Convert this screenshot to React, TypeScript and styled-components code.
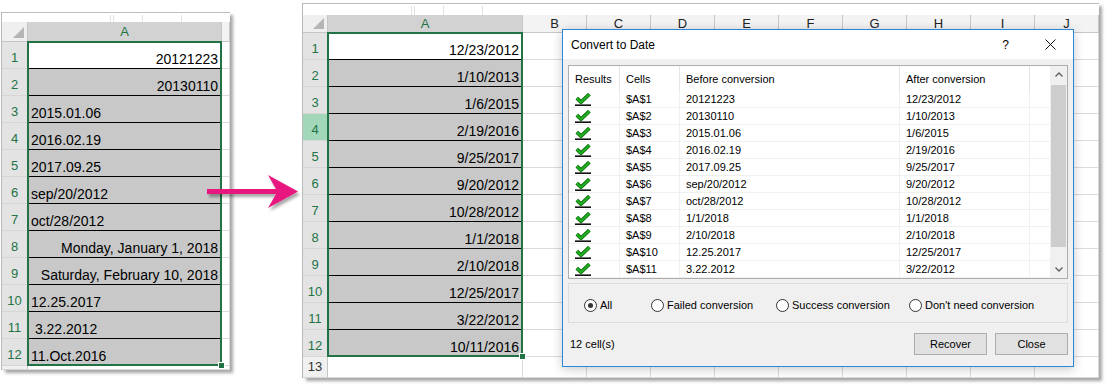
import { createGlobalStyle, styled } from "styled-components";

const GlobalStyle = createGlobalStyle`
  html, body {
    margin: 0;
    padding: 0;
    background: #ffffff;
  }
  body {
    width: 1108px;
    height: 386px;
    overflow: hidden;
    font-family: "Liberation Sans", Arial, sans-serif;
  }
  * {
    box-sizing: border-box;
  }
`;

const GREEN = "#217346";
const GRID = "#dadada";
const HEAD_LINE = "#c6c6c6";

type Align = "left" | "right";
type SheetRow = { text: string; align: Align };

const leftRows: SheetRow[] = [
  { text: "20121223", align: "right" },
  { text: "20130110", align: "right" },
  { text: "2015.01.06", align: "left" },
  { text: "2016.02.19", align: "left" },
  { text: "2017.09.25", align: "left" },
  { text: "sep/20/2012", align: "left" },
  { text: "oct/28/2012", align: "left" },
  { text: "Monday, January 1, 2018", align: "right" },
  { text: "Saturday, February 10, 2018", align: "right" },
  { text: "12.25.2017", align: "left" },
  { text: " 3.22.2012", align: "left" },
  { text: "11.Oct.2016", align: "left" },
];

const rightRows: SheetRow[] = [
  "12/23/2012",
  "1/10/2013",
  "1/6/2015",
  "2/19/2016",
  "9/25/2017",
  "9/20/2012",
  "10/28/2012",
  "1/1/2018",
  "2/10/2018",
  "12/25/2017",
  "3/22/2012",
  "10/11/2016",
].map((text) => ({ text, align: "right" as Align }));

const results = [
  ["$A$1", "20121223", "12/23/2012"],
  ["$A$2", "20130110", "1/10/2013"],
  ["$A$3", "2015.01.06", "1/6/2015"],
  ["$A$4", "2016.02.19", "2/19/2016"],
  ["$A$5", "2017.09.25", "9/25/2017"],
  ["$A$6", "sep/20/2012", "9/20/2012"],
  ["$A$7", "oct/28/2012", "10/28/2012"],
  ["$A$8", "1/1/2018", "1/1/2018"],
  ["$A$9", "2/10/2018", "2/10/2018"],
  ["$A$10", "12.25.2017", "12/25/2017"],
  ["$A$11", "3.22.2012", "3/22/2012"],
];

const ROW_H = 27;

/* ---------- page ---------- */

const Page = styled.div`
  position: relative;
  width: 1108px;
  height: 386px;
  display: flex;
  align-items: flex-start;
  gap: 73px;
  padding-left: 2px;
`;

/* ---------- spreadsheet ---------- */

const SheetFrame = styled.div<{ $top: number }>`
  position: relative;
  margin-top: ${(p) => p.$top}px;
  background: #ffffff;
  box-shadow: -1px 0 0 #b9b9b9, 3px 3px 3px rgba(0, 0, 0, 0.35);
`;

const TopStrip = styled.div<{ $h: number }>`
  height: ${(p) => p.$h}px;
  border-top: 1px solid #bdbdbd;
  background: #ffffff;
  display: flex;
  gap: 28px;
  padding: 2px 0 0 108px;
`;

const StripBox = styled.div<{ $w: number }>`
  width: ${(p) => p.$w}px;
  height: 100%;
  border-left: 1px solid #e2e2e2;
  border-right: 1px solid #e2e2e2;
`;

const HeaderRow = styled.div<{ $h: number }>`
  display: flex;
  height: ${(p) => p.$h}px;
`;

const Corner = styled.div<{ $w: number }>`
  position: relative;
  width: ${(p) => p.$w}px;
  background: #efefef;
  border-right: 1px solid ${HEAD_LINE};
  border-bottom: 1px solid ${HEAD_LINE};
  &::after {
    content: "";
    position: absolute;
    right: 3px;
    bottom: 3px;
    border-style: solid;
    border-width: 0 0 11px 11px;
    border-color: transparent transparent #b5b5b5 transparent;
  }
`;

const ColHeader = styled.div<{ $w: number; $selected?: boolean }>`
  width: ${(p) => p.$w}px;
  display: flex;
  align-items: center;
  justify-content: center;
  font-size: 13px;
  color: ${(p) => (p.$selected ? GREEN : "#222222")};
  background: ${(p) => (p.$selected ? "#d2d2d2" : "#f3f3f3")};
  border-right: 1px solid ${HEAD_LINE};
  border-bottom: 1px solid ${HEAD_LINE};
`;

const Row = styled.div<{ $h: number }>`
  display: flex;
  height: ${(p) => p.$h}px;
`;

const RowHeader = styled.div<{ $w: number; $selected?: boolean; $active?: boolean }>`
  width: ${(p) => p.$w}px;
  display: flex;
  align-items: flex-end;
  justify-content: center;
  padding-bottom: 3px;
  font-size: 13px;
  line-height: 15px;
  color: ${(p) => (p.$selected ? GREEN : "#333333")};
  background: ${(p) =>
    p.$active ? "#a3d7b9" : p.$selected ? "#e3e3e3" : "#f0f0f0"};
  border-right: 1px solid ${HEAD_LINE};
  border-bottom: 1px solid #d6d6d6;
`;

const ValueCell = styled.div<{ $w: number; $align: Align; $filled: boolean; $last: boolean }>`
  width: ${(p) => p.$w}px;
  display: flex;
  align-items: flex-end;
  justify-content: ${(p) => (p.$align === "right" ? "flex-end" : "flex-start")};
  padding: 0 3px 1px 3px;
  font-size: 14px;
  line-height: 16px;
  color: #000000;
  white-space: pre;
  overflow: hidden;
  background: ${(p) => (p.$filled ? "#c8c8c8" : "#ffffff")};
  border-right: 1px solid ${GRID};
  border-bottom: 1px solid ${(p) => (p.$last ? GRID : "#000000")};
`;

const GridCell = styled.div<{ $w: number }>`
  width: ${(p) => p.$w}px;
  border-right: 1px solid ${GRID};
  border-bottom: 1px solid ${GRID};
`;

const Selection = styled.div<{ $top: number; $left: number; $w: number; $h: number }>`
  position: absolute;
  top: ${(p) => p.$top}px;
  left: ${(p) => p.$left}px;
  width: ${(p) => p.$w}px;
  height: ${(p) => p.$h}px;
  border: 2px solid ${GREEN};
  pointer-events: none;
`;

const FillHandle = styled.div`
  position: absolute;
  right: -5px;
  bottom: -5px;
  width: 7px;
  height: 7px;
  background: ${GREEN};
  border: 1px solid #ffffff;
`;

type SheetProps = {
  top: number;
  strip: number;
  header: number;
  rowHeaderW: number;
  colAW: number;
  others: number[];
  letters: string[];
  rows: SheetRow[];
  tail: number;
  tailLabel?: string;
  activeRow?: number;
};

function Sheet(props: SheetProps) {
  const { top, strip, header, rowHeaderW, colAW, others, letters, rows, tail, tailLabel, activeRow } = props;
  return (
    <SheetFrame $top={top}>
      <TopStrip $h={strip}>
        <StripBox $w={4} />
        <StripBox $w={40} />
      </TopStrip>
      <HeaderRow $h={header}>
        <Corner $w={rowHeaderW} />
        <ColHeader $w={colAW} $selected>
          A
        </ColHeader>
        {others.map((w, i) => (
          <ColHeader key={i} $w={w}>
            {letters[i] ?? ""}
          </ColHeader>
        ))}
      </HeaderRow>
      {rows.map((r, i) => (
        <Row key={i} $h={ROW_H}>
          <RowHeader $w={rowHeaderW} $selected $active={activeRow === i + 1}>
            {i + 1}
          </RowHeader>
          <ValueCell $w={colAW} $align={r.align} $filled={i > 0} $last={i === rows.length - 1}>
            {r.text}
          </ValueCell>
          {others.map((w, j) => (
            <GridCell key={j} $w={w} />
          ))}
        </Row>
      ))}
      <Row $h={tail}>
        <RowHeader $w={rowHeaderW}>{tailLabel}</RowHeader>
        <GridCell $w={colAW} />
        {others.map((w, j) => (
          <GridCell key={j} $w={w} />
        ))}
      </Row>
      <Selection
        $top={strip + header - 1}
        $left={rowHeaderW - 1}
        $w={colAW + 1}
        $h={rows.length * ROW_H + 1}
      >
        <FillHandle />
      </Selection>
    </SheetFrame>
  );
}

/* ---------- arrow ---------- */

const ArrowSvg = styled.svg`
  position: absolute;
  left: 200px;
  top: 168px;
`;

/* ---------- dialog ---------- */

const Dialog = styled.div`
  position: absolute;
  left: 562px;
  top: 29px;
  width: 512px;
  height: 338px;
  display: flex;
  flex-direction: column;
  background: #f0f0f0;
  border: 1px solid #2b87d9;
  box-shadow: 0 2px 10px rgba(0, 0, 0, 0.22);
  font-family: "Liberation Sans", Arial, sans-serif;
  font-size: 11px;
  color: #000000;
`;

const TitleBar = styled.div`
  height: 29px;
  display: flex;
  align-items: center;
  background: #ffffff;
  padding-left: 8px;
`;

const TitleText = styled.div`
  flex: 1;
  font-size: 12px;
`;

const TitleButton = styled.div`
  width: 45px;
  height: 29px;
  display: flex;
  align-items: center;
  justify-content: center;
  font-size: 12px;
`;

const Body = styled.div`
  flex: 1;
  display: flex;
  flex-direction: column;
  padding: 6px 5px 10px 5px;
`;

const ListBox = styled.div`
  height: 214px;
  display: flex;
  background: #ffffff;
  border: 1px solid #adadad;
`;

const ListMain = styled.div`
  flex: 1;
  display: flex;
  flex-direction: column;
`;

const listColumns = "51px 60px 220px 130px 1fr";

const ListHeader = styled.div`
  display: grid;
  grid-template-columns: ${listColumns};
  height: 25px;
`;

const HeadCell = styled.div`
  display: flex;
  align-items: center;
  padding-left: 6px;
  border-right: 1px solid #e5e5e5;
  &:last-child {
    border-right: none;
  }
`;

const ListRow = styled.div`
  display: grid;
  grid-template-columns: ${listColumns};
  height: 17px;
  border-bottom: 1px solid #f0f0f0;
`;

const DataCell = styled.div`
  display: flex;
  align-items: center;
  padding-left: 6px;
  white-space: nowrap;
  border-right: 1px solid #f0f0f0;
  &:last-child {
    border-right: none;
  }
`;

const ScrollBar = styled.div`
  width: 17px;
  display: flex;
  flex-direction: column;
  background: #f0f0f0;
`;

const ScrollArrow = styled.div`
  height: 17px;
  display: flex;
  align-items: center;
  justify-content: center;
`;

const ScrollTrack = styled.div`
  flex: 1;
  padding: 2px 1px 0 1px;
`;

const ScrollThumb = styled.div`
  height: 162px;
  background: #cdcdcd;
`;

const GroupBox = styled.div`
  margin-top: 4px;
  height: 40px;
  display: grid;
  grid-template-columns: 67px 125px 133px auto;
  align-items: center;
  padding: 4px 0 0 15px;
  border: 1px solid #dcdcdc;
`;

const RadioLabel = styled.label`
  display: flex;
  align-items: center;
  gap: 3px;
  white-space: nowrap;
`;

const RadioCircle = styled.span<{ $checked?: boolean }>`
  width: 13px;
  height: 13px;
  border-radius: 50%;
  border: 1px solid #333333;
  background: #ffffff;
  display: flex;
  align-items: center;
  justify-content: center;
  &::after {
    content: "";
    width: 5px;
    height: 5px;
    border-radius: 50%;
    background: ${(p) => (p.$checked ? "#333333" : "transparent")};
  }
`;

const Footer = styled.div`
  margin-top: 10px;
  display: flex;
  align-items: center;
  padding-left: 2px;
`;

const Status = styled.div`
  flex: 1;
`;

const Buttons = styled.div`
  display: flex;
  gap: 8px;
`;

const Button = styled.div`
  width: 73px;
  height: 22px;
  display: flex;
  align-items: center;
  justify-content: center;
  background: #e1e1e1;
  border: 1px solid #adadad;
`;

function CheckIcon() {
  return (
    <svg width="16" height="13" viewBox="0 0 16 13">
      <path d="M1.8 5.2 L6 9.2 L14.4 1.2" fill="none" stroke="#0d6e0d" strokeWidth="3.8" strokeLinejoin="round" />
      <path d="M1.8 5.2 L6 9.2 L14.4 1.2" fill="none" stroke="#20b020" strokeWidth="2" strokeLinejoin="round" />
      <rect x="0" y="11.4" width="16" height="1.6" fill="#111111" />
    </svg>
  );
}

function Chevron({ up }: { up?: boolean }) {
  return (
    <svg width="8" height="5" viewBox="0 0 8 5">
      <polyline
        points={up ? "0.5,4.5 4,1 7.5,4.5" : "0.5,0.5 4,4 7.5,0.5"}
        fill="none"
        stroke="#606060"
        strokeWidth="1.4"
      />
    </svg>
  );
}

function ConvertDialog() {
  const radios = ["All", "Failed conversion", "Success conversion", "Don't need conversion"];
  return (
    <Dialog>
      <TitleBar>
        <TitleText>Convert to Date</TitleText>
        <TitleButton>?</TitleButton>
        <TitleButton>
          <svg width="11" height="11" viewBox="0 0 11 11">
            <path d="M0.5 0.5 L10.5 10.5 M10.5 0.5 L0.5 10.5" stroke="#111111" strokeWidth="1" />
          </svg>
        </TitleButton>
      </TitleBar>
      <Body>
        <ListBox>
          <ListMain>
            <ListHeader>
              <HeadCell>Results</HeadCell>
              <HeadCell>Cells</HeadCell>
              <HeadCell>Before conversion</HeadCell>
              <HeadCell>After conversion</HeadCell>
              <HeadCell />
            </ListHeader>
            {results.map(([cell, before, after]) => (
              <ListRow key={cell}>
                <DataCell>
                  <CheckIcon />
                </DataCell>
                <DataCell>{cell}</DataCell>
                <DataCell>{before}</DataCell>
                <DataCell>{after}</DataCell>
                <DataCell />
              </ListRow>
            ))}
          </ListMain>
          <ScrollBar>
            <ScrollArrow>
              <Chevron up />
            </ScrollArrow>
            <ScrollTrack>
              <ScrollThumb />
            </ScrollTrack>
            <ScrollArrow>
              <Chevron />
            </ScrollArrow>
          </ScrollBar>
        </ListBox>
        <GroupBox>
          {radios.map((r, i) => (
            <RadioLabel key={r}>
              <RadioCircle $checked={i === 0} />
              {r}
            </RadioLabel>
          ))}
        </GroupBox>
        <Footer>
          <Status>12 cell(s)</Status>
          <Buttons>
            <Button>Recover</Button>
            <Button>Close</Button>
          </Buttons>
        </Footer>
      </Body>
    </Dialog>
  );
}

export default function App() {
  return (
    <>
      <GlobalStyle />
      <Page>
        <Sheet
          top={12}
          strip={10}
          header={20}
          rowHeaderW={26}
          colAW={194}
          others={[8]}
          letters={[""]}
          rows={leftRows}
          tail={4}
        />
        <Sheet
          top={3}
          strip={12}
          header={18}
          rowHeaderW={25}
          colAW={195}
          others={[64, 64, 64, 64, 64, 64, 64, 64, 64]}
          letters={["B", "C", "D", "E", "F", "G", "H", "I", "J"]}
          rows={rightRows}
          tail={21}
          tailLabel="13"
          activeRow={4}
        />
        <ArrowSvg width="106" height="48" viewBox="0 0 106 48">
          <defs>
            <filter id="arrowShadow" x="-10%" y="-20%" width="130%" height="160%">
              <feDropShadow dx="2" dy="3" stdDeviation="1.5" floodColor="#000000" floodOpacity="0.35" />
            </filter>
          </defs>
          <path
            d="M7 21 H76 L68 7 L98 23.5 L68 40 L76 26 H7 Z"
            fill="#e8157f"
            filter="url(#arrowShadow)"
          />
        </ArrowSvg>
        <ConvertDialog />
      </Page>
    </>
  );
}
